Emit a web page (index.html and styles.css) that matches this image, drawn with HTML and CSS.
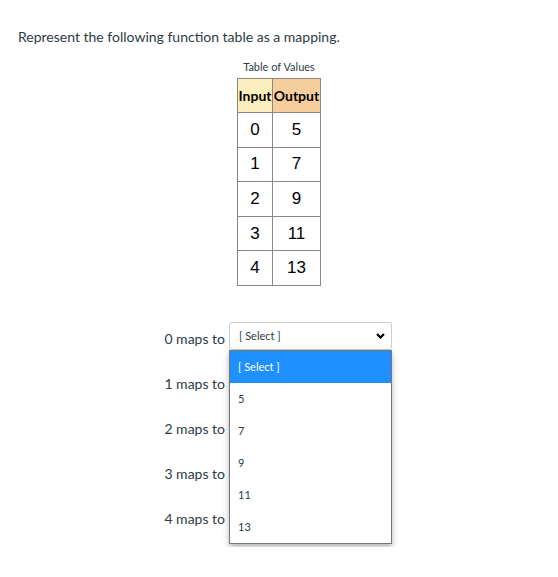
FILE: index.html
```html
<!DOCTYPE html>
<html lang="en">

<head>
    <meta charset="UTF-8">
    <meta name="viewport" content="width=device-width, initial-scale=1.0">
    <title>Function Table Mapping</title>
    <link rel="stylesheet" href="styles.css">
</head>

<body>
    <p class="question">Represent the following function table as a mapping.</p>

    <table class="values">
        <caption>Table of Values</caption>
        <thead>
            <tr>
                <th class="col-input">Input</th>
                <th class="col-output">Output</th>
            </tr>
        </thead>
        <tbody>
            <tr><td>0</td><td>5</td></tr>
            <tr><td>1</td><td>7</td></tr>
            <tr><td>2</td><td>9</td></tr>
            <tr><td>3</td><td>11</td></tr>
            <tr><td>4</td><td>13</td></tr>
        </tbody>
    </table>

    <div class="mapping">
        <div class="map-row">
            <span class="map-label">0 maps to</span>
            <div class="select-wrap">
                <div class="select">
                    <span>[ Select ]</span>
                    <svg class="chevron" width="9" height="6" viewBox="0 0 9 6"><polyline points="1,1 4.5,4.5 8,1" fill="none" stroke="#000" stroke-width="2.2"/></svg>
                </div>
                <!-- open list of the first select -->
                <ul class="dropdown">
                    <li class="active">[ Select ]</li>
                    <li>5</li>
                    <li>7</li>
                    <li>9</li>
                    <li>11</li>
                    <li>13</li>
                </ul>
            </div>
        </div>
        <div class="map-row">
            <span class="map-label">1 maps to</span>
            <div class="select-wrap">
                <div class="select"></div>
            </div>
        </div>
        <div class="map-row">
            <span class="map-label">2 maps to</span>
            <div class="select-wrap">
                <div class="select"></div>
            </div>
        </div>
        <div class="map-row">
            <span class="map-label">3 maps to</span>
            <div class="select-wrap">
                <div class="select"></div>
            </div>
        </div>
        <div class="map-row">
            <span class="map-label">4 maps to</span>
            <div class="select-wrap">
                <div class="select"></div>
            </div>
        </div>
    </div>
</body>

</html>
```

FILE: styles.css
```css
body {
    margin: 0;
    font-family: Lato, "Liberation Sans", sans-serif;
    color: #2d3b45;
    background: #fff;
}

.question {
    margin: 0;
    padding: 28px 18px 0;
    font-size: 14px;
    line-height: 18px;
}

.values {
    margin: 14px auto 0;
    border-collapse: collapse;
    border: 1px solid #888;
}

.values caption {
    font-size: 11px;
    line-height: 14px;
    padding-bottom: 4px;
    color: #2d3b45;
}

.values th,
.values td {
    border: 1px solid #888;
    padding: 0;
    text-align: center;
}

.values th {
    height: 33px;
    font-size: 14px;
    font-weight: bold;
    color: #000;
}

.values td {
    height: 33.6px;
    font-family: "Liberation Sans", Arial, sans-serif;
    font-size: 17px;
    color: #000;
}

.col-input {
    width: 34px;
    background: #fcefbd;
}

.col-output {
    width: 47px;
    background: #f8cd9c;
}

.mapping {
    width: 228px;
    padding-right: 2px;
    margin: 36px auto 0;
}

.map-row {
    display: flex;
    align-items: center;
    gap: 4px;
    margin-bottom: 17px;
}

.map-label {
    width: 61px;
    text-align: right;
    font-size: 14px;
    white-space: nowrap;
    padding-top: 6px;
}

.select-wrap {
    position: relative;
    width: 163px;
}

.select {
    box-sizing: border-box;
    height: 28px;
    display: flex;
    align-items: center;
    justify-content: space-between;
    padding: 0 6px 0 9px;
    border: 1px solid #c7cdd1;
    border-radius: 3px;
    font-size: 11px;
    background: #fff;
}

.dropdown {
    position: absolute;
    top: 100%;
    left: 0;
    width: 163px;
    box-sizing: border-box;
    margin: 0;
    padding: 0;
    list-style: none;
    background: #fff;
    border: 1px solid #767676;
    box-shadow: 0 3px 6px rgba(0, 0, 0, 0.3);
    z-index: 2;
}

.dropdown li {
    height: 32px;
    line-height: 32px;
    padding-left: 8px;
    font-size: 11px;
}

.dropdown li.active {
    background: #1e90ff;
    color: #fff;
}
```
